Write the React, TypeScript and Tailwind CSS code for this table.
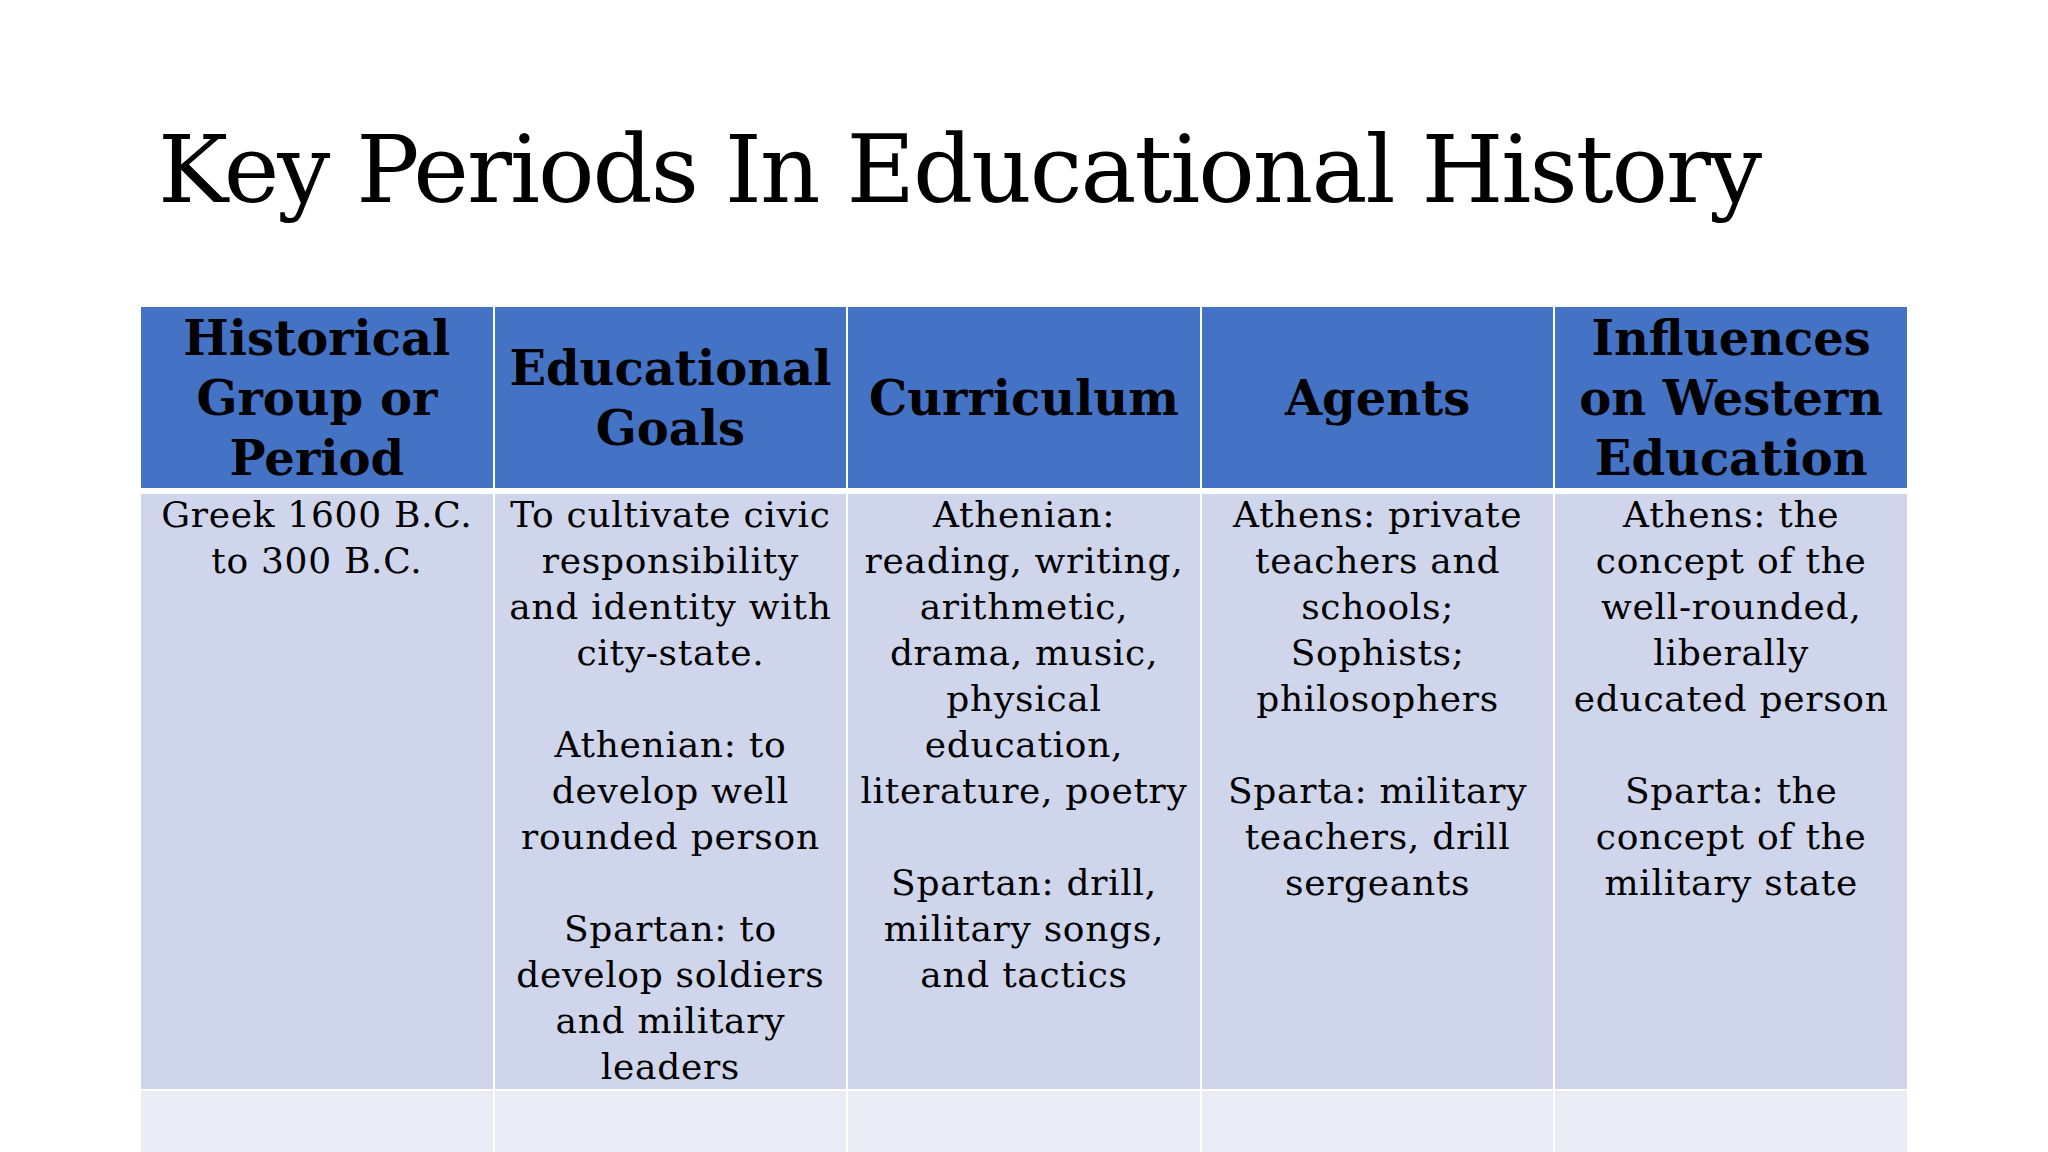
const headers = [
  ['Historical', 'Group or', 'Period'],
  ['Educational', 'Goals'],
  ['Curriculum'],
  ['Agents'],
  ['Influences', 'on Western', 'Education'],
];

const body = [
  ['Greek 1600 B.C.', 'to 300 B.C.'],
  [
    'To cultivate civic',
    'responsibility',
    'and identity with',
    'city-state.',
    '',
    'Athenian: to',
    'develop well',
    'rounded person',
    '',
    'Spartan: to',
    'develop soldiers',
    'and military',
    'leaders',
  ],
  [
    'Athenian:',
    'reading, writing,',
    'arithmetic,',
    'drama, music,',
    'physical',
    'education,',
    'literature, poetry',
    '',
    'Spartan: drill,',
    'military songs,',
    'and tactics',
  ],
  [
    'Athens: private',
    'teachers and',
    'schools;',
    'Sophists;',
    'philosophers',
    '',
    'Sparta: military',
    'teachers, drill',
    'sergeants',
  ],
  [
    'Athens: the',
    'concept of the',
    'well-rounded,',
    'liberally',
    'educated person',
    '',
    'Sparta: the',
    'concept of the',
    'military state',
  ],
];

function Lines({ lines }: { lines: string[] }) {
  return (
    <>
      {lines.map((l, i) => (
        <div key={i} className="whitespace-nowrap">
          {l === '' ? '\u00a0' : l}
        </div>
      ))}
    </>
  );
}

export default function App() {
  return (
    <div
      className="w-[2048px] h-[1152px] overflow-hidden bg-white text-black"
      style={{ fontFamily: '"DejaVu Serif", "Liberation Serif", serif' }}
    >
      <h1 className="pt-[120px] pl-[158px] text-[94px] leading-[100px] tracking-[-2px] font-normal whitespace-nowrap">
        Key Periods In Educational History
      </h1>

      <div className="ml-[141px] mt-[87px] w-[1766px] flex flex-col">
        {/* header row */}
        <div className="grid grid-cols-5 gap-x-[2px] bg-white">
          {headers.map((h, i) => (
            <div
              key={i}
              className="h-[181px] bg-[#4472c4] flex flex-col items-center justify-center text-center text-[48px] leading-[60px] font-bold"
            >
              <Lines lines={h} />
            </div>
          ))}
        </div>

        {/* body row */}
        <div className="mt-[6px] grid grid-cols-5 gap-x-[2px]">
          {body.map((c, i) => (
            <div
              key={i}
              className="h-[595px] overflow-hidden bg-[#cfd5ea] text-center text-[36px] leading-[46px] tracking-[0.7px]"
            >
              <div className="-mt-[2px] flex flex-col items-center">
                <Lines lines={c} />
              </div>
            </div>
          ))}
        </div>

        {/* empty row */}
        <div className="mt-[2px] grid grid-cols-5 gap-x-[2px]">
          {body.map((_, i) => (
            <div key={i} className="h-[62px] bg-[#e9ebf5]" />
          ))}
        </div>
      </div>
    </div>
  );
}
